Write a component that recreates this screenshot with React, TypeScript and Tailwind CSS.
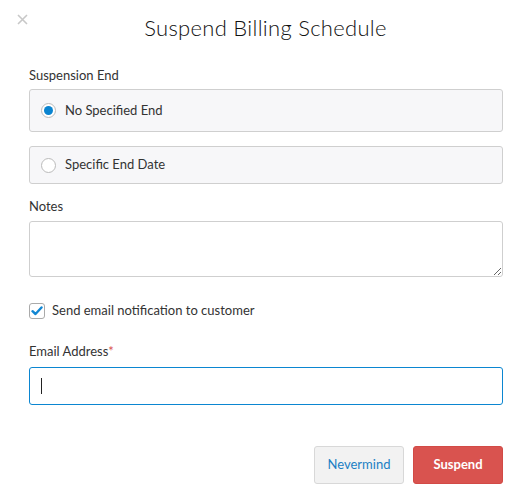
import React from "react";

const App: React.FC = () => {
  return (
    <div
      className="relative w-[531px] h-[501px] bg-white text-[#333]"
      style={{ fontFamily: "Lato, 'Open Sans', sans-serif" }}
    >
      {/* Close button */}
      <button className="absolute left-[16px] top-[13px] w-[13px] h-[13px] flex items-center justify-center">
        <svg width="11" height="11" viewBox="0 0 11 11">
          <path d="M1 1L10 10M10 1L1 10" stroke="#c8c8c8" strokeWidth="1.6" />
        </svg>
      </button>

      {/* Title */}
      <div className="pt-[14px] text-center">
        <h1 className="text-[22px] leading-[28px] font-light text-[#111] tracking-[0.3px]">
          Suspend Billing Schedule
        </h1>
      </div>

      <div className="pl-[29px] pr-[28px]">
        {/* Suspension End */}
        <div className="mt-[24px] text-[13px] leading-[18px]">Suspension End</div>
        <label className="mt-[5px] flex items-center h-[43px] rounded-[3px] border border-[#cfcfcf] bg-[#f7f7f9] pl-[11px]">
          <span className="w-[15px] h-[15px] rounded-full border border-[#bbb] bg-white flex items-center justify-center">
            <span className="w-[9px] h-[9px] rounded-full bg-[#0a84d0]" />
          </span>
          <span className="ml-[9px] text-[13px]">No Specified End</span>
        </label>
        <label className="mt-[14px] flex items-center h-[38px] rounded-[3px] border border-[#cfcfcf] bg-[#f7f7f9] pl-[11px]">
          <span className="w-[15px] h-[15px] rounded-full border border-[#bbb] bg-white" />
          <span className="ml-[9px] text-[13px]">Specific End Date</span>
        </label>

        {/* Notes */}
        <div className="mt-[13px] text-[13px] leading-[18px]">Notes</div>
        <textarea className="mt-[6px] block w-full h-[56px] rounded-[3px] border border-[#cfcfcf] bg-white outline-none" />

        {/* Notification */}
        <label className="mt-[26px] flex items-center h-[16px]">
          <span className="w-[16px] h-[16px] rounded-[3px] border border-[#aaa] bg-white flex items-center justify-center">
            <svg width="12" height="10" viewBox="0 0 12 10">
              <path d="M1.5 5.2L4.5 8L10.5 1.5" fill="none" stroke="#1287d3" strokeWidth="2.4" strokeLinecap="round" strokeLinejoin="round" />
            </svg>
          </span>
          <span className="ml-[7px] text-[13px]">Send email notification to customer</span>
        </label>

        {/* Email */}
        <div className="mt-[23px] text-[13px] leading-[18px]">
          Email Address<span className="text-[#d9534f]">*</span>
        </div>
        <div className="mt-[7px] flex items-center h-[38px] rounded-[3px] border border-[#0b86d1] bg-white pl-[11px]">
          <span className="w-[1px] h-[16px] bg-[#222]" />
        </div>

        {/* Actions */}
        <div className="mt-[41px] flex justify-end gap-[9px]">
          <button className="w-[90px] h-[38px] rounded-[3px] border border-[#d8d8d8] bg-[#f2f2f2] text-[13px] text-[#1b7fc4]">
            Nevermind
          </button>
          <button className="w-[90px] h-[38px] rounded-[3px] border border-[#d24a46] bg-[#d9534f] text-[13px] font-bold text-white">
            Suspend
          </button>
        </div>
      </div>
    </div>
  );
};

export default App;
